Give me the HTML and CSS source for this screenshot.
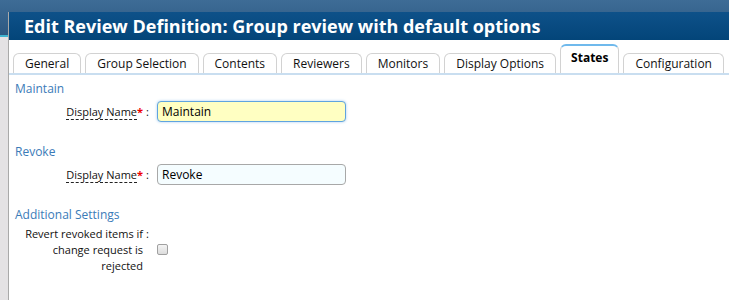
FILE: index.html
```html
<!DOCTYPE html>
<html>
<head>
<meta charset="utf-8">
<link rel="stylesheet" href="styles.css">
</head>
<body>
<div class="dialog">
  <div class="titlebar">Edit Review Definition: Group review with default options</div>
  <div class="body">
    <div class="tabs">
      <div class="tab">General</div>
      <div class="tab">Group Selection</div>
      <div class="tab">Contents</div>
      <div class="tab">Reviewers</div>
      <div class="tab">Monitors</div>
      <div class="tab">Display Options</div>
      <div class="tab active">States</div>
      <div class="tab">Configuration</div>
    </div>
    <div class="content">
      <div class="section-title">Maintain</div>
      <div class="row">
        <div class="label"><span class="help">Display Name</span><span class="req">*</span></div>
        <div class="colon">:</div>
        <input class="field focused" type="text" value="Maintain">
      </div>
      <div class="section-title">Revoke</div>
      <div class="row">
        <div class="label"><span class="help">Display Name</span><span class="req">*</span></div>
        <div class="colon">:</div>
        <input class="field" type="text" value="Revoke">
      </div>
      <div class="section-title">Additional Settings</div>
      <div class="row multi">
        <div class="label">Revert revoked items if change request is rejected</div>
        <div class="colon">:</div>
        <div class="check-cell"><span class="checkbox"></span></div>
      </div>
    </div>
  </div>
</div>
</body>
</html>
```
FILE: styles.css
```css
html, body {
  margin: 0;
  height: 100%;
}
body {
  background:
    linear-gradient(to bottom, #3e6c96 0, #2c5882 35px, #3fb4d0 35px, #3fb4d0 37px, #e4e2e4 37px, #e4e2e4 100%);
  font-family: "Open Sans", "DejaVu Sans", sans-serif;
  overflow: hidden;
}
.dialog {
  margin: 12px 0 0 8px;
  height: calc(100% - 12px);
  background: #fff;
  border-left: 1px solid #a9a9a9;
  display: flex;
  flex-direction: column;
}
.titlebar {
  height: 28px;
  line-height: 28px;
  background: linear-gradient(to bottom, #0e5189, #034579);
  color: #fff;
  font-weight: bold;
  font-size: 18px;
  padding-left: 15px;
  white-space: nowrap;
  overflow: hidden;
}
.body {
  flex: 1;
  background: #fff;
}
.tabs {
  display: flex;
  align-items: flex-end;
  gap: 4px;
  padding: 4px 0 0 4px;
  height: 29px;
  border-bottom: 2px solid #c9def0;
  white-space: nowrap;
  overflow: hidden;
}
.tab {
  flex: none;
  height: 19px;
  line-height: 20px;
  padding: 0 11px;
  border: 1px solid #d2d2d2;
  border-bottom: none;
  border-radius: 6px 6px 0 0;
  font-size: 12px;
  color: #111;
  background: #fff;
}
.tab.active {
  height: 27px;
  line-height: 24px;
  border-top: 2px solid #6fb9ec;
  font-weight: bold;
  color: #000;
  padding: 0 10px;
}
.content {
  padding: 6px 0 0 6px;
}
.section-title {
  color: #3b7bb8;
  font-size: 12px;
  line-height: 16px;
  height: 16px;
}
.row {
  display: grid;
  grid-template-columns: 128px 14px 189px;
  align-items: center;
  margin: 4px 0 22px 0;
  font-size: 11px;
  color: #111;
}
.label {
  text-align: right;
  line-height: 16px;
}
.help {
  border-bottom: 1px dashed #222;
}
.req {
  color: #e00;
  font-weight: bold;
}
.colon {
  line-height: 16px;
  padding-left: 3px;
}
.field {
  box-sizing: border-box;
  height: 21px;
  margin: 0;
  padding: 0 4px;
  border: 1px solid #a8a8a8;
  border-radius: 4px;
  background: #f5fdff;
  font-family: inherit;
  font-size: 12px;
  color: #000;
  outline: none;
}
.field.focused {
  background: #ffffc2;
  border-color: #5fa4e0;
  box-shadow: 0 0 3px #a9cdf0;
}
.row.multi {
  align-items: start;
  margin-top: 3px;
}
.check-cell {
  display: flex;
  align-items: center;
  height: 48px;
}
.checkbox {
  width: 9px;
  height: 9px;
  border: 1px solid #a0a0a0;
  border-radius: 2px;
  background: linear-gradient(to bottom, #f4f4f4, #dcdcdc);
  margin-top: -2px;
}
```
